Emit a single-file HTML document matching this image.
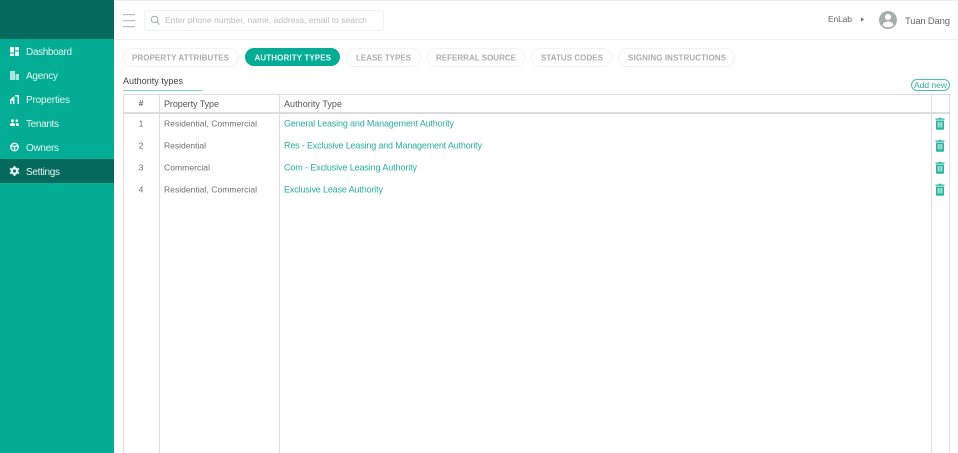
<!DOCTYPE html>
<html>
<head>
<meta charset="utf-8">
<style>
html,body{margin:0;padding:0;background:#fff;overflow:hidden}
svg{display:block;filter:blur(.35px)}
text{font-family:"Liberation Sans",sans-serif}
.n{fill:#e3f5f1;font-size:10px}
.t{font-size:8px;font-weight:bold;fill:#adadad}
.c{font-size:8.5px;fill:#6f6f6f}
.h{font-size:9px;fill:#555}
.l{font-size:9px;fill:#2aae9c}
</style>
</head>
<body>
<svg width="958" height="453" viewBox="0 0 958 453" xmlns="http://www.w3.org/2000/svg">
<defs>
<g id="trash" fill="#2bb3a1">
<path d="M-1.500 -5.500l.5-.8h2l.5 .8h3v1.300h-9v-1.300zM-4 -3.500h8v8.300a1 1 0 0 1-1 1h-6a1 1 0 0 1-1-1z"/>
<path d="M-2.300 -2h1v5.500h-1zM-.5 -2h1v5.500h-1zM1.300 -2h1v5.500h-1z" fill="#d6f2ee"/>
</g>
</defs>
<rect width="958" height="453" fill="#fff"/>
<!-- sidebar -->
<rect x="0" y="0" width="114" height="453" fill="#03ac95"/>
<rect x="0" y="0" width="114" height="39" fill="#056b5f"/>
<rect x="0" y="159" width="114" height="24" fill="#05695d"/>
<rect x="114" y="0" width="1" height="453" fill="#eefbfa"/>
<rect x="114" y="0" width="844" height="1" fill="#eaeeee"/>
<rect x="115" y="39" width="843" height="1" fill="#f0f2f2"/>
<!-- sidebar icons -->
<g fill="#e6f6f3">
<path d="M10 47h4v5.500h-4zM15 47h4v3.500h-4zM10 53.500h4v2.500h-4zM15 51.500h4v4.500h-4z"/>
<path d="M10 71h5v9h-5zM15.500 74h3.500v6h-3.500z" opacity=".75"/>
<path d="M10 104v-4.500l3.500-3 1 .8v6.700h-1.500v-3h-1.500v3zM15 95h4v9h-1.500v-7.500h-2.500z"/>
<circle cx="12.500" cy="120.700" r="1.500"/><circle cx="16.800" cy="120.700" r="1.300"/>
<path d="M10 126v-1.500c0-1 1.500-1.800 2.500-1.800s2.500 .8 2.500 1.800v1.500zM16 126v-1.500l-.5-1.500h1c1 0 2.500.6 2.500 1.500v1.500z"/>
<circle cx="14.500" cy="147" r="3.800" fill="none" stroke="#e6f6f3" stroke-width="1.300"/>
<path d="M11 145.500h7v1.500h-7zM13.800 146h1.500v4h-1.500z"/>
<circle cx="14.500" cy="171" r="2.700" fill="none" stroke="#e6f6f3" stroke-width="2.300"/>
<g stroke="#e6f6f3" stroke-width="1.700">
<path d="M14.500 166v1.500M14.500 174.500v1.500M10 168.500l1.300.8M17.700 172.700l1.300.8M10 173.500l1.300-.8M17.700 169.300l1.300-.8"/>
</g>
</g>
<!-- sidebar text -->
<text class="n" x="26" y="55" textLength="46">Dashboard</text>
<text class="n" x="26" y="79" textLength="32">Agency</text>
<text class="n" x="26" y="103" textLength="44">Properties</text>
<text class="n" x="26" y="127" textLength="33">Tenants</text>
<text class="n" x="26" y="151" textLength="33">Owners</text>
<text class="n" x="26" y="175" textLength="34">Settings</text>
<!-- topbar -->
<g fill="#b8bcbb">
<rect x="123" y="14" width="12" height="1.200"/>
<rect x="123" y="20" width="12" height="1.200"/>
<rect x="123" y="26" width="12" height="1.200"/>
</g>
<rect x="144.500" y="10.500" width="239" height="20" rx="3" fill="#fff" stroke="#f0f1f1"/>
<circle cx="154.500" cy="19.500" r="3.300" fill="none" stroke="#a5a9a8" stroke-width="1"/>
<path d="M157 22l2.500 2.500" stroke="#a5a9a8" stroke-width="1.100" fill="none"/>
<text x="165" y="23" font-size="8.500" fill="#bcbcbc" textLength="202">Enter phone number, name, address, email to search</text>
<text x="828" y="22" font-size="8.500" fill="#666" textLength="24">EnLab</text>
<path d="M861 17.500l3 2-3 2z" fill="#666"/>
<circle cx="888" cy="20" r="9" fill="#a8aeac"/>
<circle cx="888" cy="17" r="3" fill="#fff"/>
<path d="M882.500 25c.5-2.500 3-3.500 5.500-3.500s5 1 5.500 3.500c-1.300 1.500-3.300 2.200-5.500 2.200s-4.200-.7-5.500-2.200z" fill="#fff"/>
<text x="905" y="24" font-size="9.500" fill="#666" textLength="45">Tuan Dang</text>
<!-- tabs -->
<g fill="#fff" stroke="#f2f3f3">
<rect x="123.500" y="48.500" width="115" height="18" rx="9"/>
<rect x="346.500" y="48.500" width="74" height="18" rx="9"/>
<rect x="427.500" y="48.500" width="97" height="18" rx="9"/>
<rect x="531.500" y="48.500" width="80" height="18" rx="9"/>
<rect x="618.500" y="48.500" width="116" height="18" rx="9"/>
</g>
<rect x="245" y="48" width="95" height="18" rx="9" fill="#03ac95"/>
<text class="t" x="132" y="60.500" textLength="97">PROPERTY ATTRIBUTES</text>
<text class="t" x="254.500" y="60.500" textLength="76.500" style="fill:#eafaf7">AUTHORITY TYPES</text>
<text class="t" x="356" y="60.500" textLength="55">LEASE TYPES</text>
<text class="t" x="436" y="60.500" textLength="80">REFERRAL SOURCE</text>
<text class="t" x="541" y="60.500" textLength="62">STATUS CODES</text>
<text class="t" x="628" y="60.500" textLength="98">SIGNING INSTRUCTIONS</text>
<!-- section heading -->
<text x="123" y="84" font-size="9" fill="#444" textLength="60">Authority types</text>
<rect x="123" y="90" width="80" height="1" fill="#8ad3c9"/>
<rect x="911.500" y="79.500" width="38" height="11" rx="5.500" fill="#fff" stroke="#4cbfaf"/>
<text x="914" y="88" font-size="8.500" fill="#2aae9c" textLength="33">Add new</text>
<!-- table -->
<g fill="#dcdddd">
<rect x="123" y="94" width="827" height="1"/>
<rect x="123" y="112" width="827" height="2"/>
<rect x="123" y="94" width="1" height="359"/>
<rect x="159" y="94" width="1" height="359"/>
<rect x="279" y="94" width="1" height="359"/>
<rect x="931" y="94" width="1" height="359"/>
<rect x="949" y="94" width="1" height="359"/>
</g>
<text x="141" y="106" font-size="8.500" font-weight="bold" fill="#666" text-anchor="middle">#</text>
<text class="h" x="164" y="107" textLength="55">Property Type</text>
<text class="h" x="284" y="107" textLength="58">Authority Type</text>
<text class="c" x="141" y="126.500" text-anchor="middle">1</text>
<text class="c" x="141" y="148.500" text-anchor="middle">2</text>
<text class="c" x="141" y="170.500" text-anchor="middle">3</text>
<text class="c" x="141" y="192.500" text-anchor="middle">4</text>
<text class="c" x="164" y="126.500" textLength="93">Residential, Commercial</text>
<text class="c" x="164" y="148.500" textLength="42">Residential</text>
<text class="c" x="164" y="170.500" textLength="46">Commercial</text>
<text class="c" x="164" y="192.500" textLength="93">Residential, Commercial</text>
<text class="l" x="284" y="126.500" textLength="170">General Leasing and Management Authority</text>
<text class="l" x="284" y="148.500" textLength="198">Res - Exclusive Leasing and Management Authority</text>
<text class="l" x="284" y="170.500" textLength="133">Com - Exclusive Leasing Authority</text>
<text class="l" x="284" y="192.500" textLength="99">Exclusive Lease Authority</text>
<use href="#trash" x="940" y="124"/>
<use href="#trash" x="940" y="146"/>
<use href="#trash" x="940" y="168"/>
<use href="#trash" x="940" y="190"/>
</svg>
</body>
</html>
